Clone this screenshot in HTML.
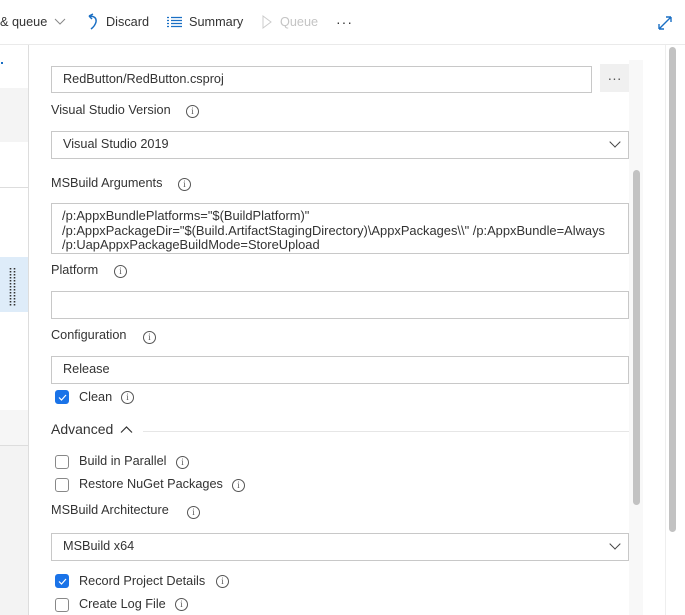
<!DOCTYPE html>
<html><head><meta charset="utf-8"><style>
*{box-sizing:border-box;margin:0;padding:0}
body{width:685px;height:615px;overflow:hidden;background:#fff;font-family:"Liberation Sans",Arial,sans-serif;font-size:12.7px;color:#333;position:relative}
.a{position:absolute;white-space:nowrap}
.lbl{position:absolute;line-height:16px;color:#333}
.box{position:absolute;border:1px solid #c8c8c8;background:#fff;padding-left:11px;line-height:25px;color:#333}
.info{position:absolute;width:13px;height:13px;border:1px solid #555;border-radius:50%;font-size:9px;line-height:11px;text-align:center;color:#555;font-family:"Liberation Serif",serif}
.cb{position:absolute;width:14px;height:14px;border:1px solid #888;border-radius:3px;background:#fff}
.cb.on{background:#1a73e8;border-color:#1a73e8}
.chev{position:absolute;width:8px;height:8px;border-right:1.3px solid #444;border-bottom:1.3px solid #444;transform:rotate(45deg)}
</style></head><body>
<!-- toolbar -->
<div class="a" style="left:0;top:14px;line-height:16px;color:#333">&amp; queue</div>
<svg class="a" style="left:54px;top:16px" width="12" height="10"><path d="M1 3 L6 8 L11 3" fill="none" stroke="#888" stroke-width="1"/></svg>
<svg class="a" style="left:86px;top:13px" width="14" height="18"><path d="M3 3 L7 1 M3 3 L6 6 M3 3 Q11 3 10 9 Q9 13 5 16" fill="none" stroke="#1a6fc4" stroke-width="1.5"/></svg>
<div class="a" style="left:106px;top:14px;line-height:16px">Discard</div>
<svg class="a" style="left:167px;top:16px" width="15" height="12"><path d="M0 1.5H2M4 1.5H15M0 4.5H2M4 4.5H15M0 7.5H2M4 7.5H15M0 10.5H2M4 10.5H15" stroke="#1a6fc4" stroke-width="1.2"/></svg>
<div class="a" style="left:189px;top:14px;line-height:16px">Summary</div>
<svg class="a" style="left:262px;top:15px" width="10" height="14"><path d="M1 1 L9 7 L1 13 Z" fill="none" stroke="#ccc" stroke-width="1"/></svg>
<div class="a" style="left:280px;top:14px;line-height:16px;color:#c4c4c4">Queue</div>
<div class="a" style="left:336px;top:14px;line-height:16px;font-size:14px;letter-spacing:1px">···</div>
<svg class="a" style="left:657px;top:15px" width="16" height="16"><path d="M2 14 L14 2 M2 14 L2 9 M2 14 L7 14 M14 2 L9 2 M14 2 L14 7" fill="none" stroke="#1a6fc4" stroke-width="1.4"/></svg>
<div class="a" style="left:0;top:44px;width:685px;height:1px;background:#eaeaea"></div>
<!-- left column -->
<div class="a" style="left:0;top:88px;width:28px;height:54px;background:#f4f4f4"></div>
<div class="a" style="left:0;top:187px;width:28px;height:1px;background:#ddd"></div>
<div class="a" style="left:0;top:257px;width:28px;height:55px;background:#deecf9"></div>
<svg class="a" style="left:9px;top:267px" width="8" height="40"><path d="M1.5 1V39M5.5 1V39" stroke="#333" stroke-width="1.6" stroke-dasharray="1.5 1.5"/></svg>
<div class="a" style="left:0;top:410px;width:28px;height:35px;background:#f6f6f6"></div>
<div class="a" style="left:0;top:445px;width:28px;height:1px;background:#ddd"></div>
<div class="a" style="left:0;top:446px;width:28px;height:169px;background:#f3f3f3"></div>
<div class="a" style="left:1px;top:62px;width:2px;height:2px;background:#1a6fc4"></div>
<div class="a" style="left:28px;top:45px;width:1px;height:570px;background:#ddd"></div>
<!-- right strips -->
<div class="a" style="left:629px;top:60px;width:14px;height:555px;background:#f8f8f8"></div>
<div class="a" style="left:633px;top:170px;width:7px;height:335px;background:#c2c2c2;border-radius:4px"></div>
<div class="a" style="left:665px;top:45px;width:1px;height:570px;background:#eee"></div>
<div class="a" style="left:669px;top:47px;width:7px;height:485px;background:#c2c2c2;border-radius:4px"></div>
<!-- form -->
<div class="box" style="left:51px;top:66px;width:541px;height:27px">RedButton/RedButton.csproj</div>
<div class="a" style="left:600px;top:64px;width:29px;height:28px;background:#f0f0f0;text-align:center;line-height:28px;font-size:14px;color:#555">···</div>
<div class="lbl" style="left:51px;top:102px">Visual Studio Version</div><div class="info" style="left:186px;top:105px">i</div>
<div class="box" style="left:51px;top:131px;width:578px;height:28px">Visual Studio 2019</div><div class="chev" style="left:611px;top:138px"></div>
<div class="lbl" style="left:51px;top:175px">MSBuild Arguments</div><div class="info" style="left:178px;top:178px">i</div>
<div class="box" style="left:51px;top:203px;width:578px;height:51px;line-height:14.5px;padding-top:5px;padding-left:10px;overflow:hidden;font-size:12.9px">/p:AppxBundlePlatforms="$(BuildPlatform)"<br>/p:AppxPackageDir="$(Build.ArtifactStagingDirectory)\AppxPackages\\" /p:AppxBundle=Always<br>/p:UapAppxPackageBuildMode=StoreUpload</div>
<div class="lbl" style="left:51px;top:262px">Platform</div><div class="info" style="left:114px;top:265px">i</div>
<div class="box" style="left:51px;top:291px;width:578px;height:28px"></div>
<div class="lbl" style="left:51px;top:327px">Configuration</div><div class="info" style="left:143px;top:331px">i</div>
<div class="box" style="left:51px;top:356px;width:578px;height:28px">Release</div>
<div class="cb on" style="left:55px;top:390px"></div><svg class="a" style="left:58px;top:394px" width="9" height="7"><path d="M1 3.5 L3.5 6 L8 1" fill="none" stroke="#fff" stroke-width="1.2"/></svg>
<div class="lbl" style="left:79px;top:389px">Clean</div><div class="info" style="left:121px;top:391px">i</div>
<div class="lbl" style="left:51px;top:421px;font-size:14px">Advanced</div>
<svg class="a" style="left:120px;top:425px" width="13" height="9"><path d="M1 7.5 L6.5 2 L12 7.5" fill="none" stroke="#333" stroke-width="1.2"/></svg>
<div class="a" style="left:143px;top:431px;width:486px;height:1px;background:#e6e6e6"></div>
<div class="cb" style="left:55px;top:455px"></div><div class="lbl" style="left:79px;top:453px">Build in Parallel</div><div class="info" style="left:176px;top:456px">i</div>
<div class="cb" style="left:55px;top:478px"></div><div class="lbl" style="left:79px;top:476px">Restore NuGet Packages</div><div class="info" style="left:232px;top:479px">i</div>
<div class="lbl" style="left:51px;top:502px">MSBuild Architecture</div><div class="info" style="left:187px;top:506px">i</div>
<div class="box" style="left:51px;top:533px;width:578px;height:28px">MSBuild x64</div><div class="chev" style="left:611px;top:540px"></div>
<div class="cb on" style="left:55px;top:574px"></div><svg class="a" style="left:58px;top:578px" width="9" height="7"><path d="M1 3.5 L3.5 6 L8 1" fill="none" stroke="#fff" stroke-width="1.2"/></svg>
<div class="lbl" style="left:79px;top:573px">Record Project Details</div><div class="info" style="left:216px;top:575px">i</div>
<div class="cb" style="left:55px;top:598px"></div><div class="lbl" style="left:79px;top:596px">Create Log File</div><div class="info" style="left:175px;top:598px">i</div>
</body></html>
